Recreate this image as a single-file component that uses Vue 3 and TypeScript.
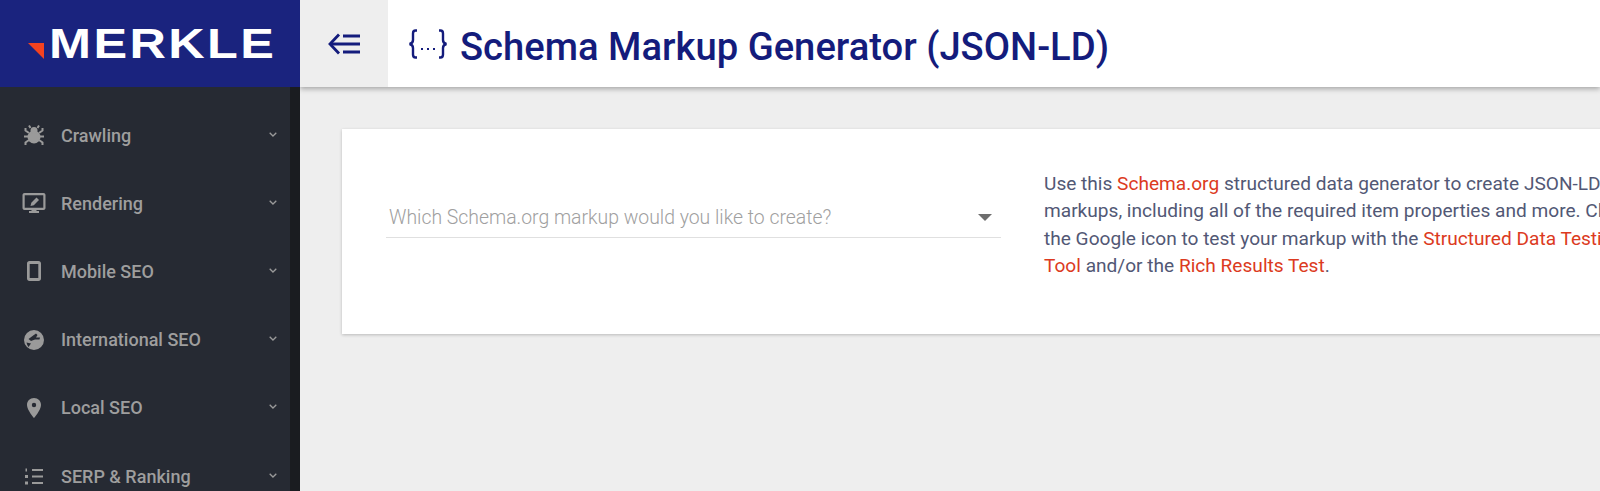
<script setup lang="ts">
const navItems = [
  { key: 'bug', label: 'Crawling' },
  { key: 'desktop', label: 'Rendering' },
  { key: 'mobile', label: 'Mobile SEO' },
  { key: 'globe', label: 'International SEO' },
  { key: 'pin', label: 'Local SEO' },
  { key: 'list', label: 'SERP & Ranking' }
]
</script>

<template>
  <div class="page">
    <aside class="sidebar">
      <div class="logo">
        <svg class="logo-mark" width="16" height="16" viewBox="0 0 16 16"><path d="M0 0H16V16Z" fill="#f4421f" /></svg>
        <span class="logo-text">MERKLE</span>
      </div>
      <nav class="nav">
        <a v-for="item in navItems" :key="item.key" class="nav-item">
          <svg class="nav-icon" width="24" height="24" viewBox="0 0 24 24" fill="#9a9a9a">
            <template v-if="item.key === 'bug'">
              <ellipse cx="12" cy="14" rx="6.500" ry="6.500" />
              <circle cx="12" cy="7.500" r="3.500" />
              <path d="M8.500 5 7 2.500M15.500 5 17 2.500M7 10 3.500 7.500V5M17 10l3.500-2.500V5M6 13.500H2M18 13.500h4M7 17l-3.500 2.500V22M17 17l3.500 2.500V22" stroke="#9a9a9a" stroke-width="2" fill="none" />
            </template>
            <template v-else-if="item.key === 'desktop'">
              <path d="M2.500 2H21.500C22.600 2 23.500 2.900 23.500 4V17C23.500 18.100 22.600 19 21.500 19H14.500V20H17V22H7V20H9.500V19H2.500C1.400 19 .5 18.100 .5 17V4C.5 2.900 1.400 2 2.500 2ZM2.700 4.200V16.800H21.300V4.200Z" fill-rule="evenodd" />
              <path d="M8.500 15 9.300 11.800 14.500 6.500 17 9 11.800 14.200Z" />
            </template>
            <template v-else-if="item.key === 'mobile'">
              <path d="M7.500 2H16.500C18 2 19 3 19 4.500V19.500C19 21 18 22 16.500 22H7.500C6 22 5 21 5 19.500V4.500C5 3 6 2 7.500 2ZM7.700 5V19H16.300V5Z" fill-rule="evenodd" />
            </template>
            <template v-else-if="item.key === 'globe'">
              <path d="M12 2A10 10 0 1 0 12 22 10 10 0 0 0 12 2ZM4.500 14.500 9 15.500 6.500 19C5.500 17.800 4.900 16.300 4.500 14.500ZM10.500 8 14 5.500 15.500 7 14 9.500 18 9.500 17.500 11.500 13 11.500 9 13 6.500 11Z" fill-rule="evenodd" />
            </template>
            <template v-else-if="item.key === 'pin'">
              <path d="M12 2C7.900 2 5 5.100 5 9 5 14 12 22 12 22S19 14 19 9C19 5.100 16.100 2 12 2ZM12 11.200A2.200 2.200 0 1 1 12 6.800 2.200 2.200 0 0 1 12 11.200Z" fill-rule="evenodd" />
            </template>
            <template v-else>
              <path d="M10 5H21V7H10ZM10 11.500H21V13.500H10ZM10 18H21V20H10ZM3.500 4.500H5V7.500H3.500ZM3 11H6V14H3ZM3 17.500H6V20.500H3Z" />
            </template>
          </svg>
          <span class="nav-label">{{ item.label }}</span>
          <svg class="nav-chevron" width="8" height="5" viewBox="0 0 8 5"><path d="M.7.7 4 4 7.300.7" fill="none" stroke="#9a9a9a" stroke-width="1.300" /></svg>
        </a>
      </nav>
    </aside>

    <div class="content">
      <header class="topbar">
        <button class="toggle" type="button">
          <svg width="32" height="22" viewBox="0 0 32 22" fill="none" stroke="#141c7c" stroke-width="2.800">
            <path d="M11 1.500 2 11 11 20.500" />
            <path d="M2 11H32M15 3H32M15 19H32" />
          </svg>
        </button>
        <svg class="braces" width="40" height="30" viewBox="0 0 40 30" fill="none" stroke="#141c7c" stroke-width="2.400">
          <path d="M9 1.500H7.500C5.500 1.500 5 2.500 5 4.500V11C5 13 4 14.500 1.500 15 4 15.500 5 17 5 19V25.500C5 27.500 5.500 28.500 7.500 28.500H9" />
          <path d="M31 1.500H32.500C34.500 1.500 35 2.500 35 4.500V11C35 13 36 14.500 38.500 15 36 15.500 35 17 35 19V25.500C35 27.500 34.500 28.500 32.500 28.500H31" />
          <path d="M13 20h2M19 20h2M25 20h2" stroke-width="2" />
        </svg>
        <h1 class="title">Schema Markup Generator (JSON-LD)</h1>
      </header>

      <main class="main">
        <section class="card">
          <div class="select">
            <span class="placeholder">Which Schema.org markup would you like to create?</span>
            <span class="caret"></span>
          </div>
          <p class="intro">
            Use this <a>Schema.org</a> structured data generator to create JSON-LD markups, including all of the required item properties and more. Click the Google icon to test your markup with the <a>Structured Data Testing Tool</a> and/or the <a>Rich Results Test</a>.
          </p>
        </section>
      </main>
    </div>
  </div>
</template>

<style>
html,
body {
  margin: 0;
  overflow: hidden;
}
</style>

<style scoped>
.page {
  display: flex;
  width: 1600px;
  height: 491px;
  overflow: hidden;
  background: #eeeeee;
  font-family: Roboto, "Liberation Sans", sans-serif;
}

.sidebar {
  flex: none;
  width: 300px;
  display: flex;
  flex-direction: column;
  background: #262a33;
  border-right: 10px solid #1a1c20;
  box-sizing: border-box;
  z-index: 2;
}

.logo {
  flex: none;
  height: 87px;
  margin-right: -10px;
  padding: 29px 0 0 28px;
  box-sizing: border-box;
  display: flex;
  align-items: flex-start;
  background: #1a237e;
}

.logo-mark {
  margin-top: 14px;
  flex: none;
}

.logo-text {
  margin-left: 5px;
  font-family: "Liberation Sans", sans-serif;
  font-weight: 700;
  font-size: 42px;
  letter-spacing: 2px;
  line-height: 30px;
  color: #fff;
  transform: scaleX(1.2);
  transform-origin: left top;
}

.nav {
  padding-top: 14px;
}

.nav-item {
  height: 68.200px;
  display: flex;
  align-items: center;
  padding-left: 22px;
  color: #9e9e9e;
  font-size: 18px;
  font-weight: 500;
}

.nav-icon {
  flex: none;
  width: 24px;
  height: 24px;
}

.nav-label {
  margin-left: 15px;
  flex: 1;
}

.nav-chevron {
  flex: none;
  margin: 0 13px 2px 0;
}

.content {
  flex: 1;
  min-width: 0;
  display: flex;
  flex-direction: column;
}

.topbar {
  flex: none;
  height: 87px;
  display: flex;
  align-items: center;
  background: #fff;
  box-shadow: 0 2px 5px rgba(0, 0, 0, 0.3);
  position: relative;
  z-index: 1;
}

.toggle {
  flex: none;
  width: 88px;
  height: 87px;
  padding: 0;
  border: 0;
  background: #eeeeee;
  display: flex;
  align-items: center;
  justify-content: center;
}

.braces {
  flex: none;
  margin: 0 0 0 20px;
}

.title {
  margin: 6px 0 0 12px;
  font-size: 38.200px;
  font-weight: 500;
  color: #141c7c;
  white-space: nowrap;
}

.main {
  flex: 1;
  padding: 42px 0 0 42px;
}

.card {
  width: 1400px;
  height: 205px;
  display: flex;
  align-items: center;
  background: #fff;
  box-shadow: 0 1px 3px rgba(0, 0, 0, 0.22);
}

.select {
  flex: none;
  width: 615px;
  height: 36px;
  margin: 0 0 24px 44px;
  padding: 0 3px 3px;
  box-sizing: border-box;
  border-bottom: 1px solid #e0e0e0;
  display: flex;
  align-items: center;
  justify-content: space-between;
}

.placeholder {
  font-size: 19.400px;
  font-weight: 300;
  color: #a0a0a0;
}

.caret {
  margin-right: 6px;
  border-left: 7px solid transparent;
  border-right: 7px solid transparent;
  border-top: 7px solid #6e6e6e;
}

.intro {
  width: 604px;
  margin: 0 0 14px 43px;
  font-size: 19.100px;
  line-height: 27.300px;
  color: #525875;
}

.intro a {
  color: #dc3a21;
}
</style>
